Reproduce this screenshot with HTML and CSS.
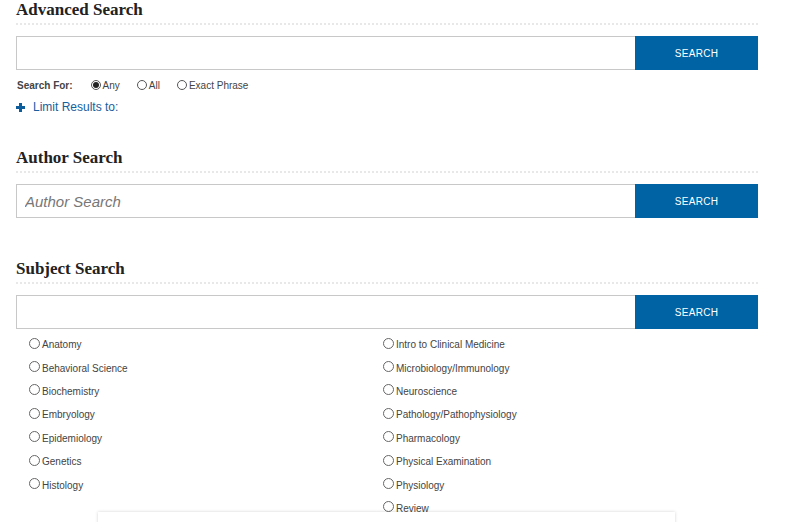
FILE: index.html
```html
<!DOCTYPE html>
<html>
<head>
<meta charset="utf-8">
<link rel="stylesheet" href="styles.css">
</head>
<body>
<div class="page">
  <section class="block">
    <h2 class="title">Advanced Search</h2>
    <div class="search-row">
      <input class="search-input" type="text">
      <button class="search-btn">SEARCH</button>
    </div>
    <div class="search-for">
      <span class="sf-label">Search For:</span>
      <label class="opt"><input type="radio" name="sf" checked><span>Any</span></label>
      <label class="opt"><input type="radio" name="sf"><span>All</span></label>
      <label class="opt"><input type="radio" name="sf"><span>Exact Phrase</span></label>
    </div>
    <div class="limit">
      <svg class="plus" width="9" height="9" viewBox="0 0 9 9"><rect x="3" y="0" width="3" height="9" fill="#0d5d9c"/><rect x="0" y="3" width="9" height="3" fill="#0d5d9c"/></svg>
      <span>Limit Results to:</span>
    </div>
  </section>

  <section class="block author">
    <h2 class="title">Author Search</h2>
    <div class="search-row">
      <input class="search-input" type="text" placeholder="Author Search">
      <button class="search-btn">SEARCH</button>
    </div>
  </section>

  <section class="block subject">
    <h2 class="title">Subject Search</h2>
    <div class="search-row">
      <input class="search-input" type="text">
      <button class="search-btn">SEARCH</button>
    </div>
    <div class="subjects">
      <div class="col">
        <label class="subj"><input type="radio" name="subj"><span>Anatomy</span></label>
        <label class="subj"><input type="radio" name="subj"><span>Behavioral Science</span></label>
        <label class="subj"><input type="radio" name="subj"><span>Biochemistry</span></label>
        <label class="subj"><input type="radio" name="subj"><span>Embryology</span></label>
        <label class="subj"><input type="radio" name="subj"><span>Epidemiology</span></label>
        <label class="subj"><input type="radio" name="subj"><span>Genetics</span></label>
        <label class="subj"><input type="radio" name="subj"><span>Histology</span></label>
      </div>
      <div class="col">
        <label class="subj"><input type="radio" name="subj"><span>Intro to Clinical Medicine</span></label>
        <label class="subj"><input type="radio" name="subj"><span>Microbiology/Immunology</span></label>
        <label class="subj"><input type="radio" name="subj"><span>Neuroscience</span></label>
        <label class="subj"><input type="radio" name="subj"><span>Pathology/Pathophysiology</span></label>
        <label class="subj"><input type="radio" name="subj"><span>Pharmacology</span></label>
        <label class="subj"><input type="radio" name="subj"><span>Physical Examination</span></label>
        <label class="subj"><input type="radio" name="subj"><span>Physiology</span></label>
        <label class="subj"><input type="radio" name="subj"><span>Review</span></label>
      </div>
    </div>
  </section>
</div>
<div class="bottom-panel"></div>
</body>
</html>
```
FILE: styles.css
```css
* { box-sizing: border-box; }
html, body { margin: 0; padding: 0; background: #fff; }
body {
  font-family: "Liberation Sans", Arial, sans-serif;
  color: #444;
  width: 786px;
  height: 522px;
  overflow: hidden;
  position: relative;
}
.page {
  width: 742px;
  margin-left: 16px;
}
.title {
  margin: 0;
  font-family: "Liberation Serif", "Times New Roman", serif;
  font-weight: bold;
  font-size: 17px;
  line-height: 20px;
  color: #222;
  padding-bottom: 3px;
  border-bottom: 2px dotted #e8e8e8;
}
.search-row {
  display: flex;
  margin-top: 11px;
  height: 34px;
}
.search-input {
  flex: 1;
  height: 34px;
  border: 1px solid #c8c8c8;
  border-right: none;
  margin: 0;
  padding: 0 8px;
  font-family: "Liberation Sans", Arial, sans-serif;
  font-size: 15px;
  outline: none;
}
.search-input::placeholder {
  color: #777;
  font-style: italic;
}
.search-btn {
  width: 123px;
  height: 34px;
  margin: 0;
  border: none;
  background: #0064a4;
  color: #fff;
  font-family: "Liberation Sans", Arial, sans-serif;
  font-size: 10px;
  letter-spacing: 0.3px;
  padding: 0;
}
.search-for {
  display: flex;
  align-items: center;
  margin-top: 8px;
  height: 14px;
  padding-left: 1px;
  font-size: 10px;
}
.sf-label {
  font-weight: bold;
  color: #444;
}
.opt {
  display: flex;
  align-items: center;
  margin-left: 18px;
  color: #444;
}
.opt + .opt { margin-left: 17px; }
input[type="radio"] {
  appearance: none;
  -webkit-appearance: none;
  width: 10px;
  height: 10px;
  margin: 0 2px 0 0;
  border: 1px solid #555;
  border-radius: 50%;
  background: #fff;
  position: relative;
  flex: none;
}
input[type="radio"]:checked::after {
  content: "";
  position: absolute;
  left: 1px;
  top: 1px;
  width: 6px;
  height: 6px;
  border-radius: 50%;
  background: #222;
}
.limit {
  display: flex;
  align-items: center;
  margin-top: 8px;
  height: 14px;
  font-size: 12px;
  color: #15609e;
}
.plus { margin-right: 8px; }
.author { margin-top: 34px; }
.subject { margin-top: 41px; }
.subjects {
  display: flex;
  margin-top: 4px;
  padding-left: 13px;
}
.col {
  width: 354px;
  display: flex;
  flex-direction: column;
}
.subj {
  display: flex;
  align-items: center;
  height: 23.4px;
  font-size: 10px;
  color: #444;
}
.subj input[type="radio"] {
  width: 11px;
  height: 11px;
  margin-top: -3px;
  border-color: #666;
}
.bottom-panel {
  position: absolute;
  left: 98px;
  top: 512px;
  width: 577px;
  height: 30px;
  background: #fff;
  box-shadow: 0 0 3px rgba(0,0,0,0.18);
  z-index: 2;
}
```
